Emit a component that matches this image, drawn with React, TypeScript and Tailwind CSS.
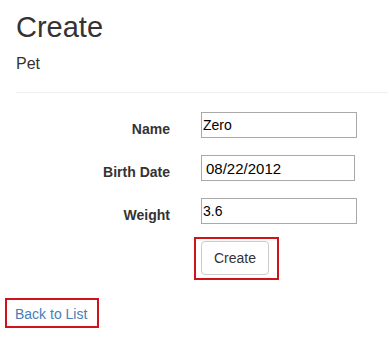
const fields = [
  { label: "Name", value: "Zero", w: "w-[156px]", text: "text-[14px] pl-[1px]" },
  { label: "Birth Date", value: "08/22/2012", w: "w-[154px]", text: "text-[15px] pl-[4px]" },
  { label: "Weight", value: "3.6", w: "w-[156px]", text: "text-[14px] pl-[1px]" },
];

export default function App() {
  return (
    <div className="min-h-screen bg-white pl-4 pr-px font-['Liberation_Sans',Arial,sans-serif] text-[#333]">
      <h2 className="pt-[11px] text-[29px] leading-[33px]">Create</h2>
      <h4 className="mt-[10px] text-[16px] leading-5">Pet</h4>
      <hr className="mt-[18px] border-t border-[#eee]" />

      <form className="mt-[19px] flex flex-col gap-4" onSubmit={(e) => e.preventDefault()}>
        {fields.map((f) => (
          <div key={f.label} className="flex items-start">
            <label className="w-[154px] pt-[7px] text-right text-[14px] font-bold leading-5">
              {f.label}
            </label>
            <input
              defaultValue={f.value}
              className={`ml-[31px] h-[26px] ${f.w} ${f.text} border border-[#a9a9a9] bg-white text-black outline-none`}
            />
          </div>
        ))}
      </form>

      <div className="ml-[178px] mt-[12px] flex w-fit border-2 border-[#d0121b] pb-[3px] pl-[5px] pr-[8px] pt-[2px]">
        <button className="rounded border border-[#ccc] bg-white px-3 py-[6px] text-[14px] leading-5 text-[#333]">
          Create
        </button>
      </div>

      <div className="-ml-[11px] mt-[18px] flex w-fit border-2 border-[#d0121b] pb-[2px] pl-[8px] pr-[10px] pt-[4px]">
        <a href="#" className="text-[14px] leading-5 text-[#4a7db5]">
          Back to List
        </a>
      </div>
    </div>
  );
}
